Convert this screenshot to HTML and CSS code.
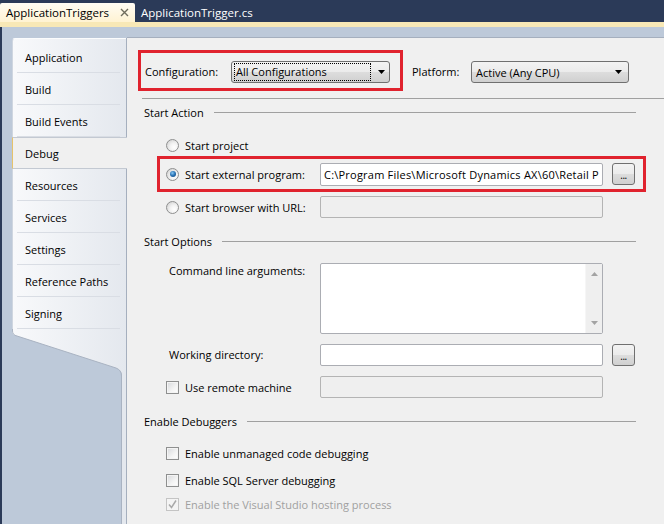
FILE: index.html
```html
<!DOCTYPE html>
<html>
<head>
<meta charset="utf-8">
<title>ApplicationTriggers - Debug</title>
<link rel="stylesheet" href="styles.css">
</head>
<body>
<div class="tabbar">
  <div class="doctab active"><span>ApplicationTriggers</span><svg class="close" width="9" height="9" viewBox="0 0 9 9"><path d="M1 1 L8 8 M8 1 L1 8" stroke="#6f6c5c" stroke-width="1.4" fill="none"/></svg></div>
  <div class="doctab"><span>ApplicationTrigger.cs</span></div>
</div>
<div class="band"></div>
<div class="main">
  <nav class="nav">
    <div class="nav-items">
      <div class="nav-item">Application</div>
      <div class="nav-item">Build</div>
      <div class="nav-item">Build Events</div>
      <div class="nav-item sel">Debug</div>
      <div class="nav-item">Resources</div>
      <div class="nav-item">Services</div>
      <div class="nav-item">Settings</div>
      <div class="nav-item">Reference Paths</div>
      <div class="nav-item">Signing</div>
    </div>
    <div class="nav-foot">
      <svg class="foot-shape" width="114" height="52" viewBox="0 0 114 52">
        <defs>
          <linearGradient id="navg" x1="0" y1="0" x2="114" y2="0" gradientUnits="userSpaceOnUse">
            <stop offset="0" stop-color="#f8f9fb"/>
            <stop offset="1" stop-color="#e4e8ee"/>
          </linearGradient>
        </defs>
        <path d="M0 0 H114 V52 H110 V47 Q110 41 104 39 L5 7 Q0 6 0 2 Z" fill="url(#navg)"/>
        <path d="M0.5 0 V2 Q0.5 6 5 7 L104 39 Q109.5 41 109.5 47 V52" fill="none" stroke="#a9b3c2" stroke-width="1"/>
      </svg>
      <div class="foot-strip"></div>
    </div>
  </nav>
  <section class="content">
    <div class="config-row">
      <div class="hl hl-config">
        <span class="cfg-label">Configuration:</span>
        <div class="combo combo-cfg">
          <span class="focus">All Configurations</span>
          <svg class="arrow" width="7" height="4" viewBox="0 0 7 4"><path d="M0 0 H7 L3.5 4 Z" fill="#000"/></svg>
        </div>
      </div>
      <div class="platform">
        <span class="plat-label">Platform:</span>
        <div class="combo combo-plat">
          <span class="combo-text">Active (Any CPU)</span>
          <svg class="arrow" width="7" height="4" viewBox="0 0 7 4"><path d="M0 0 H7 L3.5 4 Z" fill="#000"/></svg>
        </div>
      </div>
    </div>
    <div class="sep"></div>

    <div class="group g-action">Start Action</div>
    <div class="row r-project">
      <span class="radio"></span><span class="opt-label">Start project</span>
    </div>
    <div class="hl hl-ext">
      <span class="radio on"></span><span class="opt-label">Start external program:</span>
      <div class="text path">C:\Program Files\Microsoft Dynamics AX\60\Retail P</div>
      <div class="btn">...</div>
    </div>
    <div class="row r-url">
      <span class="radio"></span><span class="opt-label">Start browser with URL:</span>
      <div class="text disabled"></div>
    </div>

    <div class="group g-options">Start Options</div>
    <div class="row r-cmd">
      <span class="field-label">Command line arguments:</span>
      <div class="textarea">
        <div class="vscroll">
          <svg width="7" height="4" viewBox="0 0 7 4"><path d="M0 4 H7 L3.5 0 Z" fill="#a3a3a3"/></svg>
          <svg width="7" height="4" viewBox="0 0 7 4"><path d="M0 0 H7 L3.5 4 Z" fill="#a3a3a3"/></svg>
        </div>
      </div>
    </div>
    <div class="row r-dir">
      <span class="field-label">Working directory:</span>
      <div class="text"></div>
      <div class="btn">...</div>
    </div>
    <div class="row r-remote">
      <span class="check"></span><span class="opt-label">Use remote machine</span>
      <div class="text disabled"></div>
    </div>

    <div class="group g-debuggers">Enable Debuggers</div>
    <div class="row r-c1">
      <span class="check"></span><span class="check-label">Enable unmanaged code debugging</span>
    </div>
    <div class="row r-c2">
      <span class="check"></span><span class="check-label">Enable SQL Server debugging</span>
    </div>
    <div class="row r-c3">
      <span class="check checked-disabled"><svg width="11" height="11" viewBox="0 0 11 11"><path d="M2 5.5 L4.5 8.5 L9 1.5" fill="none" stroke="#a9a9a9" stroke-width="1.5"/></svg></span><span class="check-label muted">Enable the Visual Studio hosting process</span>
    </div>
  </section>
</div>
</body>
</html>
```
FILE: styles.css
```css
* { box-sizing: border-box; }
html, body { margin: 0; padding: 0; }
body {
  width: 664px;
  height: 524px;
  overflow: hidden;
  background: #293955;
  font-family: "Open Sans", "Noto Sans", sans-serif;
  font-size: 11px;
  color: #000;
}

/* document tabs */
.tabbar {
  height: 22px;
  display: flex;
  align-items: flex-end;
  background: #2b3a58;
}
.doctab {
  height: 19px;
  display: flex;
  align-items: center;
  padding: 0 6px;
  color: #fff;
  font-size: 11.5px;
  white-space: nowrap;
}
.doctab.active {
  width: 135px;
  justify-content: space-between;
  padding-right: 6px;
  color: #000;
  background: linear-gradient(#fffcf4, #fff3d2);
  border-radius: 2px 2px 0 0;
}
.close { display: block; }
.band {
  height: 5px;
  background: #f8e8b6;
}

/* main area */
.main {
  display: flex;
  height: 497px;
  background: #bdc9d9;
  border-left: 2px solid #2b3a58;
  padding-top: 10px;
}

/* left navigation */
.nav {
  width: 115px;
  margin-left: 10px;
  margin-top: 1px;
  display: flex;
  flex-direction: column;
  border-right: 1px solid #a5afbe;
}
.nav-items {
  background: linear-gradient(to right, #f8f9fb, #e4e8ee);
  border-left: 1px solid #cfd6e0;
  border-top: 1px solid #fbfcfd;
  border-top-left-radius: 3px;
  padding-top: 2px;
}
.nav-item {
  height: 32px;
  display: flex;
  align-items: center;
  padding-left: 12px;
  white-space: nowrap;
  background: linear-gradient(#d9dde4, #d9dde4) no-repeat 4px 100% / 103px 1px;
}
.nav-item.sel {
  margin: 0 -1px 0 -1px;
  border: 1px solid #c3c9d2;
  border-right: 0;
  border-left-color: #e6c36b;
  background: #f0f0f0;
}
.nav-foot {
  flex: 1;
  position: relative;
  display: flex;
  justify-content: flex-end;
}
.foot-shape {
  position: absolute;
  top: 0;
  left: 0;
}
.foot-strip {
  width: 5px;
  border-left: 1px solid #a9b3c2;
  background: #e4e8ee;
}

/* content */
.content {
  flex: 1;
  background: #f0f0f0;
  border-top: 1px solid #a5afbe;
}
.hl { border: 3px solid #e0232e; }

.config-row {
  display: flex;
  align-items: flex-start;
  margin: 12px 0 0 11px;
}
.hl-config {
  width: 265px;
  height: 41px;
  display: flex;
  align-items: flex-start;
  padding: 8px 0 0 4px;
}
.cfg-label { width: 86px; line-height: 22px; }
.combo {
  height: 22px;
  display: flex;
  align-items: center;
  border: 1px solid #707070;
  border-radius: 3px;
  background: linear-gradient(#f3f3f3 0%, #ebebeb 50%, #dddddd 51%, #d0d0d0 100%);
  white-space: nowrap;
}
.combo-cfg { width: 159px; }
.focus {
  margin-left: 2px;
  width: 137px;
  height: 18px;
  line-height: 16px;
  padding-left: 1px;
  border: 1px dotted #000;
}
.arrow { margin-left: auto; margin-right: 4px; display: block; }
.platform {
  display: flex;
  margin: 11px 0 0 9px;
}
.plat-label { width: 59px; line-height: 22px; }
.combo-plat { width: 158px; }
.combo-plat .combo-text { padding-left: 4px; }
.combo-plat .arrow { margin-right: 6px; }

.sep {
  margin: 7px 0 0 15px;
  border-top: 1px solid #a0a0a0;
}

.group {
  display: flex;
  align-items: center;
  height: 16px;
  margin: 0 28px 0 17px;
  white-space: nowrap;
}
.group::after {
  content: "";
  flex: 1;
  margin-left: 10px;
  border-top: 1px solid #a0a0a0;
}
.g-action { margin-top: 5px; }
.g-options { margin-top: 15px; }
.g-debuggers { margin-top: 15px; }

.row {
  display: flex;
  align-items: center;
  white-space: nowrap;
}
.r-project { margin: 15px 0 0 39px; height: 20px; }
.hl-ext {
  margin: 1px 0 0 30px;
  width: 489px;
  height: 36px;
  display: flex;
  align-items: center;
  padding-left: 6px;
  white-space: nowrap;
}
.r-url { margin: 4px 0 0 39px; height: 22px; }
.r-cmd { margin: 14px 0 0 42px; align-items: flex-start; }
.r-dir { margin: 10px 0 0 42px; height: 22px; }
.r-remote { margin: 10px 0 0 39px; height: 22px; }
.r-c1 { margin: 14px 0 0 39px; height: 20px; }
.r-c2 { margin: 7px 0 0 39px; height: 20px; }
.r-c3 { margin: 4px 0 0 39px; height: 20px; }

.radio {
  flex: none;
  width: 13px;
  height: 13px;
  border-radius: 50%;
  border: 1px solid #8e8f8f;
  background: radial-gradient(circle at 65% 65%, #ffffff 0%, #f2f2f2 40%, #c9c9c9 100%);
  display: flex;
  align-items: center;
  justify-content: center;
}
.radio.on::before {
  content: "";
  width: 6px;
  height: 6px;
  border-radius: 50%;
  background: radial-gradient(circle at 40% 35%, #8ac8f4 0%, #2d77b8 45%, #0d3c72 100%);
}
.opt-label { width: 135px; margin-left: 6px; }
.check-label { margin-left: 6px; }
.muted { color: #a0a0a0; }
.field-label { width: 151px; line-height: 16px; }

.text {
  flex: none;
  width: 283px;
  height: 23px;
  border: 1px solid #abadb3;
  border-radius: 2px;
  background: #fff;
  padding-left: 3px;
  line-height: 21px;
  overflow: hidden;
  white-space: nowrap;
}
.text.path { letter-spacing: 0.22px; }
.row .text { height: 22px; line-height: 20px; }
.text.disabled {
  background: #efefef;
  border-color: #b4b4b4;
}
.btn {
  flex: none;
  width: 23px;
  height: 22px;
  margin-left: 9px;
  border: 1px solid #707070;
  border-radius: 3px;
  background: linear-gradient(#f3f3f3 0%, #ebebeb 50%, #dddddd 51%, #d0d0d0 100%);
  display: flex;
  justify-content: center;
  align-items: center;
  font-size: 10px;
  line-height: 12px;
  padding-top: 1px;
  letter-spacing: -0.5px;
}
.textarea {
  flex: none;
  width: 283px;
  height: 71px;
  border: 1px solid #abadb3;
  border-radius: 2px;
  background: #fff;
  display: flex;
  justify-content: flex-end;
}
.vscroll {
  width: 17px;
  background: #efefef;
  border-left: 1px solid #f6f6f6;
  display: flex;
  flex-direction: column;
  justify-content: space-between;
  align-items: center;
  padding: 8px 0 8px 0;
}
.vscroll svg { display: block; }

.check {
  flex: none;
  width: 13px;
  height: 13px;
  border: 1px solid #8e8f8f;
  background: linear-gradient(135deg, #d6d8db 0%, #f4f4f4 60%, #ffffff 100%);
  box-shadow: inset 0 0 0 1px #f4f4f4;
  display: flex;
  align-items: center;
  justify-content: center;
}
.check.checked-disabled {
  border-color: #c4c4c4;
  background: #f4f4f4;
  box-shadow: none;
}
.check svg { display: block; }
```
